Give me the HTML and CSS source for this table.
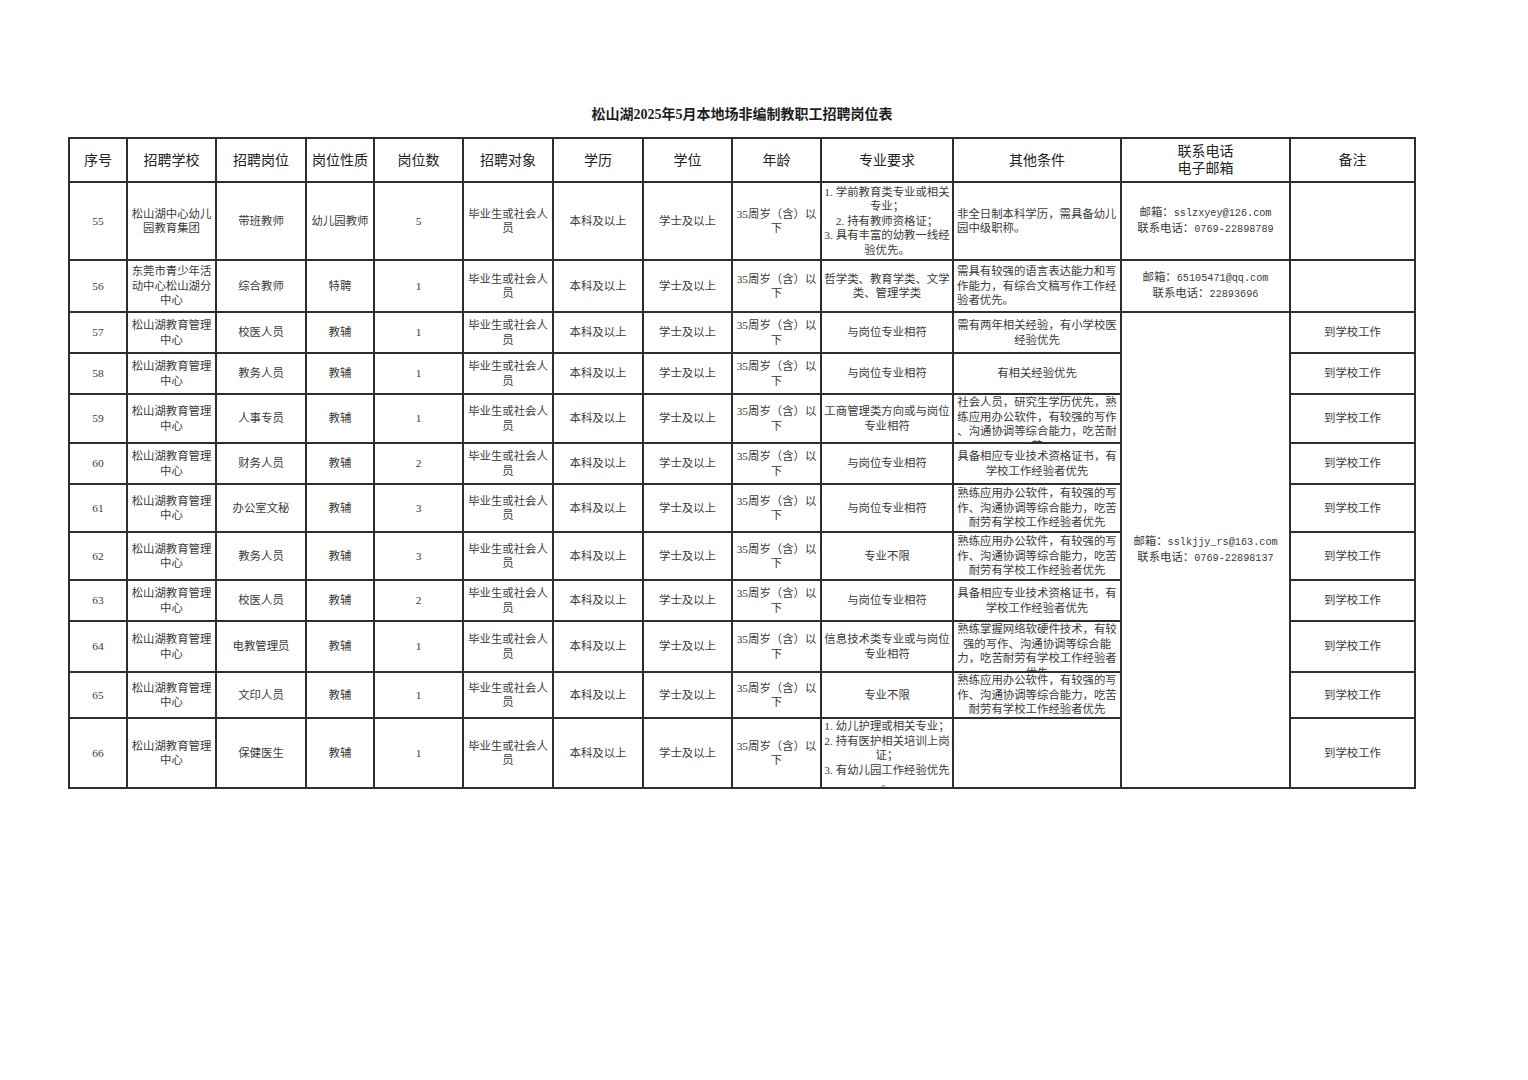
FILE: index.html
```html
<!DOCTYPE html>
<html lang="zh-CN">
<head>
<meta charset="utf-8">
<title>松山湖2025年5月本地场非编制教职工招聘岗位表</title>
<link rel="stylesheet" href="styles.css">
</head>
<body>
<div class="page">
  <h1 class="title">松山湖2025年5月本地场非编制教职工招聘岗位表</h1>
  <div class="sheet">
    <div class="c h">序号</div>
    <div class="c h">招聘学校</div>
    <div class="c h">招聘岗位</div>
    <div class="c h">岗位性质</div>
    <div class="c h">岗位数</div>
    <div class="c h">招聘对象</div>
    <div class="c h">学历</div>
    <div class="c h">学位</div>
    <div class="c h">年龄</div>
    <div class="c h">专业要求</div>
    <div class="c h">其他条件</div>
    <div class="c h"><div>联系电话<br>电子邮箱</div></div>
    <div class="c h">备注</div>

    <!-- 55 -->
    <div class="c">55</div>
    <div class="c">松山湖中心幼儿<br>园教育集团</div>
    <div class="c">带班教师</div>
    <div class="c">幼儿园教师</div>
    <div class="c">5</div>
    <div class="c">毕业生或社会人<br>员</div>
    <div class="c">本科及以上</div>
    <div class="c">学士及以上</div>
    <div class="c">35周岁（含）以<br>下</div>
    <div class="c">1. 学前教育类专业或相关<br>专业；<br>2. 持有教师资格证；<br>3. 具有丰富的幼教一线经<br>验优先。</div>
    <div class="c left">非全日制本科学历，需具备幼儿<br>园中级职称。</div>
    <div class="c"><div>邮箱：<span class="mono">sslzxyey@126.com</span><br>联系电话：<span class="mono">0769-22898789</span></div></div>
    <div class="c"></div>

    <!-- 56 -->
    <div class="c">56</div>
    <div class="c">东莞市青少年活<br>动中心松山湖分<br>中心</div>
    <div class="c">综合教师</div>
    <div class="c">特聘</div>
    <div class="c">1</div>
    <div class="c">毕业生或社会人<br>员</div>
    <div class="c">本科及以上</div>
    <div class="c">学士及以上</div>
    <div class="c">35周岁（含）以<br>下</div>
    <div class="c">哲学类、教育学类、文学<br>类、管理学类</div>
    <div class="c left">需具有较强的语言表达能力和写<br>作能力，有综合文稿写作工作经<br>验者优先。</div>
    <div class="c"><div>邮箱：<span class="mono">65105471@qq.com</span><br>联系电话：<span class="mono">22893696</span></div></div>
    <div class="c"></div>

    <!-- 57 -->
    <div class="c">57</div>
    <div class="c">松山湖教育管理<br>中心</div>
    <div class="c">校医人员</div>
    <div class="c">教辅</div>
    <div class="c">1</div>
    <div class="c">毕业生或社会人<br>员</div>
    <div class="c">本科及以上</div>
    <div class="c">学士及以上</div>
    <div class="c">35周岁（含）以<br>下</div>
    <div class="c">与岗位专业相符</div>
    <div class="c">需有两年相关经验，有小学校医<br>经验优先</div>
    <div class="c merged"><div>邮箱：<span class="mono">sslkjjy_rs@163.com</span><br>联系电话：<span class="mono">0769-22898137</span></div></div>
    <div class="c">到学校工作</div>

    <!-- 58 -->
    <div class="c">58</div>
    <div class="c">松山湖教育管理<br>中心</div>
    <div class="c">教务人员</div>
    <div class="c">教辅</div>
    <div class="c">1</div>
    <div class="c">毕业生或社会人<br>员</div>
    <div class="c">本科及以上</div>
    <div class="c">学士及以上</div>
    <div class="c">35周岁（含）以<br>下</div>
    <div class="c">与岗位专业相符</div>
    <div class="c">有相关经验优先</div>
    <div class="c">到学校工作</div>

    <!-- 59 -->
    <div class="c">59</div>
    <div class="c">松山湖教育管理<br>中心</div>
    <div class="c">人事专员</div>
    <div class="c">教辅</div>
    <div class="c">1</div>
    <div class="c">毕业生或社会人<br>员</div>
    <div class="c">本科及以上</div>
    <div class="c">学士及以上</div>
    <div class="c">35周岁（含）以<br>下</div>
    <div class="c">工商管理类方向或与岗位<br>专业相符</div>
    <div class="c">社会人员，研究生学历优先，熟<br>练应用办公软件，有较强的写作<br>、沟通协调等综合能力，吃苦耐<br>劳</div>
    <div class="c">到学校工作</div>

    <!-- 60 -->
    <div class="c">60</div>
    <div class="c">松山湖教育管理<br>中心</div>
    <div class="c">财务人员</div>
    <div class="c">教辅</div>
    <div class="c">2</div>
    <div class="c">毕业生或社会人<br>员</div>
    <div class="c">本科及以上</div>
    <div class="c">学士及以上</div>
    <div class="c">35周岁（含）以<br>下</div>
    <div class="c">与岗位专业相符</div>
    <div class="c">具备相应专业技术资格证书，有<br>学校工作经验者优先</div>
    <div class="c">到学校工作</div>

    <!-- 61 -->
    <div class="c">61</div>
    <div class="c">松山湖教育管理<br>中心</div>
    <div class="c">办公室文秘</div>
    <div class="c">教辅</div>
    <div class="c">3</div>
    <div class="c">毕业生或社会人<br>员</div>
    <div class="c">本科及以上</div>
    <div class="c">学士及以上</div>
    <div class="c">35周岁（含）以<br>下</div>
    <div class="c">与岗位专业相符</div>
    <div class="c">熟练应用办公软件，有较强的写<br>作、沟通协调等综合能力，吃苦<br>耐劳有学校工作经验者优先</div>
    <div class="c">到学校工作</div>

    <!-- 62 -->
    <div class="c">62</div>
    <div class="c">松山湖教育管理<br>中心</div>
    <div class="c">教务人员</div>
    <div class="c">教辅</div>
    <div class="c">3</div>
    <div class="c">毕业生或社会人<br>员</div>
    <div class="c">本科及以上</div>
    <div class="c">学士及以上</div>
    <div class="c">35周岁（含）以<br>下</div>
    <div class="c">专业不限</div>
    <div class="c">熟练应用办公软件，有较强的写<br>作、沟通协调等综合能力，吃苦<br>耐劳有学校工作经验者优先</div>
    <div class="c">到学校工作</div>

    <!-- 63 -->
    <div class="c">63</div>
    <div class="c">松山湖教育管理<br>中心</div>
    <div class="c">校医人员</div>
    <div class="c">教辅</div>
    <div class="c">2</div>
    <div class="c">毕业生或社会人<br>员</div>
    <div class="c">本科及以上</div>
    <div class="c">学士及以上</div>
    <div class="c">35周岁（含）以<br>下</div>
    <div class="c">与岗位专业相符</div>
    <div class="c">具备相应专业技术资格证书，有<br>学校工作经验者优先</div>
    <div class="c">到学校工作</div>

    <!-- 64 -->
    <div class="c">64</div>
    <div class="c">松山湖教育管理<br>中心</div>
    <div class="c">电教管理员</div>
    <div class="c">教辅</div>
    <div class="c">1</div>
    <div class="c">毕业生或社会人<br>员</div>
    <div class="c">本科及以上</div>
    <div class="c">学士及以上</div>
    <div class="c">35周岁（含）以<br>下</div>
    <div class="c">信息技术类专业或与岗位<br>专业相符</div>
    <div class="c">熟练掌握网络软硬件技术，有较<br>强的写作、沟通协调等综合能<br>力，吃苦耐劳有学校工作经验者<br>优先</div>
    <div class="c">到学校工作</div>

    <!-- 65 -->
    <div class="c">65</div>
    <div class="c">松山湖教育管理<br>中心</div>
    <div class="c">文印人员</div>
    <div class="c">教辅</div>
    <div class="c">1</div>
    <div class="c">毕业生或社会人<br>员</div>
    <div class="c">本科及以上</div>
    <div class="c">学士及以上</div>
    <div class="c">35周岁（含）以<br>下</div>
    <div class="c">专业不限</div>
    <div class="c">熟练应用办公软件，有较强的写<br>作、沟通协调等综合能力，吃苦<br>耐劳有学校工作经验者优先</div>
    <div class="c">到学校工作</div>

    <!-- 66 -->
    <div class="c">66</div>
    <div class="c">松山湖教育管理<br>中心</div>
    <div class="c">保健医生</div>
    <div class="c">教辅</div>
    <div class="c">1</div>
    <div class="c">毕业生或社会人<br>员</div>
    <div class="c">本科及以上</div>
    <div class="c">学士及以上</div>
    <div class="c">35周岁（含）以<br>下</div>
    <div class="c">1. 幼儿护理或相关专业；<br>2. 持有医护相关培训上岗<br>证；<br>3. 有幼儿园工作经验优先<br>。</div>
    <div class="c"></div>
    <div class="c">到学校工作</div>
  </div>
</div>
</body>
</html>
```

FILE: styles.css
```css
html, body {
  margin: 0;
  padding: 0;
  background: #ffffff;
}

.page {
  padding: 105px 0 0 68px;
  font-family: "Liberation Serif", "Noto Sans CJK SC", serif;
  color: #3a3a3a;
}

.title {
  width: 1348px;
  margin: 0 0 12px 0;
  font-size: 14px;
  line-height: 20px;
  font-weight: 700;
  text-align: center;
  color: #1e1e1e;
}

.sheet {
  display: grid;
  width: max-content;
  grid-template-columns: 56px 87px 88px 66px 87px 88px 88px 87px 87px 130px 166px 167px 123px;
  grid-template-rows: 42px 76px 50px 39px 39px 47px 39px 46px 46px 39px 49px 44px 68px;
  gap: 2px;
  border: 2px solid #2e2e2e;
  background: #2e2e2e;
}

.c {
  background: #ffffff;
  overflow: hidden;
  display: flex;
  flex-direction: column;
  justify-content: safe center;
  align-items: center;
  text-align: center;
  white-space: nowrap;
  font-size: 11.4px;
  line-height: 14.5px;
  padding: 0 1px;
}

.c.h {
  font-size: 14px;
  line-height: 17px;
  color: #222222;
}

.c.left {
  align-items: flex-start;
  text-align: left;
  padding-left: 3px;
}

.merged {
  grid-row: span 10;
}

.mono {
  font-family: "Liberation Mono", monospace;
  font-size: 10.2px;
}
```
